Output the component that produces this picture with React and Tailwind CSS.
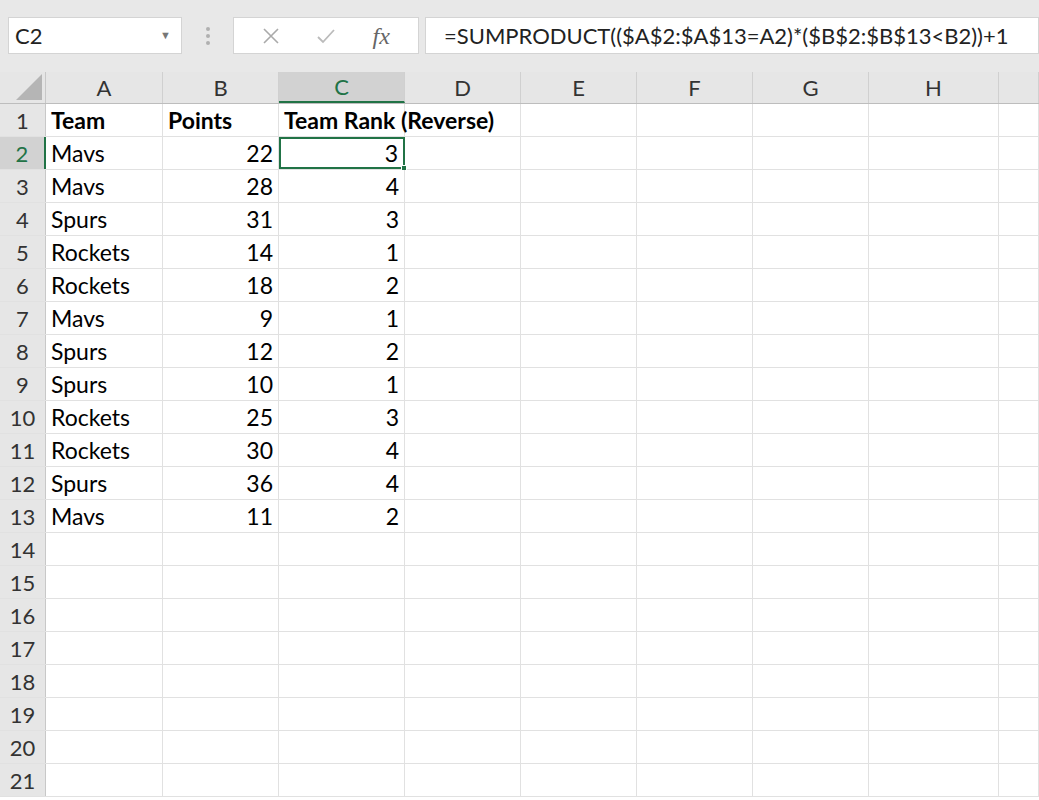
import React from "react";

const data = [
  ["Mavs", 22, 3], ["Mavs", 28, 4], ["Spurs", 31, 3], ["Rockets", 14, 1],
  ["Rockets", 18, 2], ["Mavs", 9, 1], ["Spurs", 12, 2], ["Spurs", 10, 1],
  ["Rockets", 25, 3], ["Rockets", 30, 4], ["Spurs", 36, 4], ["Mavs", 11, 2],
];
const cols = [
  ["A", "w-[117px]"], ["B", "w-[116px]"], ["C", "w-[126px]"], ["D", "w-[116px]"],
  ["E", "w-[116px]"], ["F", "w-[116px]"], ["G", "w-[116px]"], ["H", "w-[130px]"], ["", "w-[40px]"],
];

export default function App() {
  const rows = [];
  for (let r = 1; r <= 21; r++) {
    let vals = Array(9).fill(null);
    if (r === 1) vals = ["Team", "Points", "Team Rank (Reverse)", null, null, null, null, null, null];
    else if (r <= 13) { const d = data[r - 2]; vals = [d[0], d[1], d[2], null, null, null, null, null, null]; }
    rows.push({ r, vals });
  }
  return (
    <div className="w-[1039px] h-[800px] overflow-hidden bg-white text-black" style={{ fontFamily: "Lato, 'Open Sans', sans-serif" }}>
      <div className="h-[72px] bg-[#e8e8e8] flex items-start pt-[17px] gap-0">
        <div className="ml-[8px] w-[174px] h-[37px] bg-white border border-[#d4d4d4] flex items-center justify-between px-[6px]">
          <span className="text-[22px] text-[#222]">C2</span>
          <span className="text-[#777] text-[11px] mr-[4px]">▼</span>
        </div>
        <div className="w-[51px] h-[37px] flex flex-col items-center justify-center gap-[3px]">
          <div className="w-[4px] h-[4px] rounded-full bg-[#b0b0b0]" />
          <div className="w-[4px] h-[4px] rounded-full bg-[#b0b0b0]" />
          <div className="w-[4px] h-[4px] rounded-full bg-[#b0b0b0]" />
        </div>
        <div className="w-[186px] h-[37px] bg-white border border-[#d4d4d4] flex items-center justify-around px-[10px]">
          <svg width="18" height="18" viewBox="0 0 18 18"><path d="M2 2L16 16M16 2L2 16" stroke="#aaa" strokeWidth="1.6" /></svg>
          <svg width="20" height="18" viewBox="0 0 20 18"><path d="M2 10L7 15L18 3" stroke="#bbb" strokeWidth="1.8" fill="none" /></svg>
          <span className="text-[24px] italic text-[#666]" style={{ fontFamily: "'Liberation Serif', serif" }}>fx</span>
        </div>
        <div className="ml-[6px] flex-1 h-[37px] bg-white border border-[#d4d4d4] flex items-center pl-[18px]">
          <span className="text-[22px] text-[#222] whitespace-nowrap">=SUMPRODUCT(($A$2:$A$13=A2)*($B$2:$B$13&lt;B2))+1</span>
        </div>
      </div>
      <div className="flex h-[32px] bg-[#e6e6e6] border-b border-[#bdbdbd]">
        <div className="w-[46px] shrink-0 border-r border-[#c8c8c8] relative">
          <svg className="absolute right-[3px] bottom-[3px]" width="26" height="26" viewBox="0 0 26 26"><path d="M26 0L26 26L0 26Z" fill="#b5b5b5" /></svg>
        </div>
        {cols.map(([c, w], i) => (
          <div key={i} className={`${w} shrink-0 flex items-center justify-center text-[22px] border-r border-[#d0d0d0] ${c === "C" ? "bg-[#d2d2d2] text-[#217346] border-b-2 border-b-[#217346]" : "text-[#333]"}`}>{c}</div>
        ))}
      </div>
      {rows.map(({ r, vals }) => (
        <div key={r} className="flex h-[33px] border-b border-[#e1e1e1]">
          <div className={`w-[46px] shrink-0 flex items-center justify-center text-[22px] border-r ${r === 2 ? "bg-[#d2d2d2] text-[#217346] border-r-2 border-r-[#217346]" : "bg-[#e6e6e6] text-[#333] border-[#c8c8c8]"}`}>{r}</div>
          {cols.map(([c, w], i) => {
            const v = vals[i];
            const num = typeof v === "number";
            const sel = r === 2 && c === "C";
            return (
              <div key={i} className={`${w} shrink-0 relative flex items-center px-[5px] text-[23px] whitespace-nowrap ${num ? "justify-end" : ""} ${r === 1 ? "font-bold overflow-visible" : ""} ${sel ? "border-2 border-[#217346]" : "border-r border-[#e1e1e1]"}`}>
                <span className={r === 1 ? "relative z-10" : ""}>{v}</span>
                {sel && <div className="absolute right-[-4px] bottom-[-4px] w-[6px] h-[6px] bg-[#217346] border border-white" />}
              </div>
            );
          })}
        </div>
      ))}
    </div>
  );
}
